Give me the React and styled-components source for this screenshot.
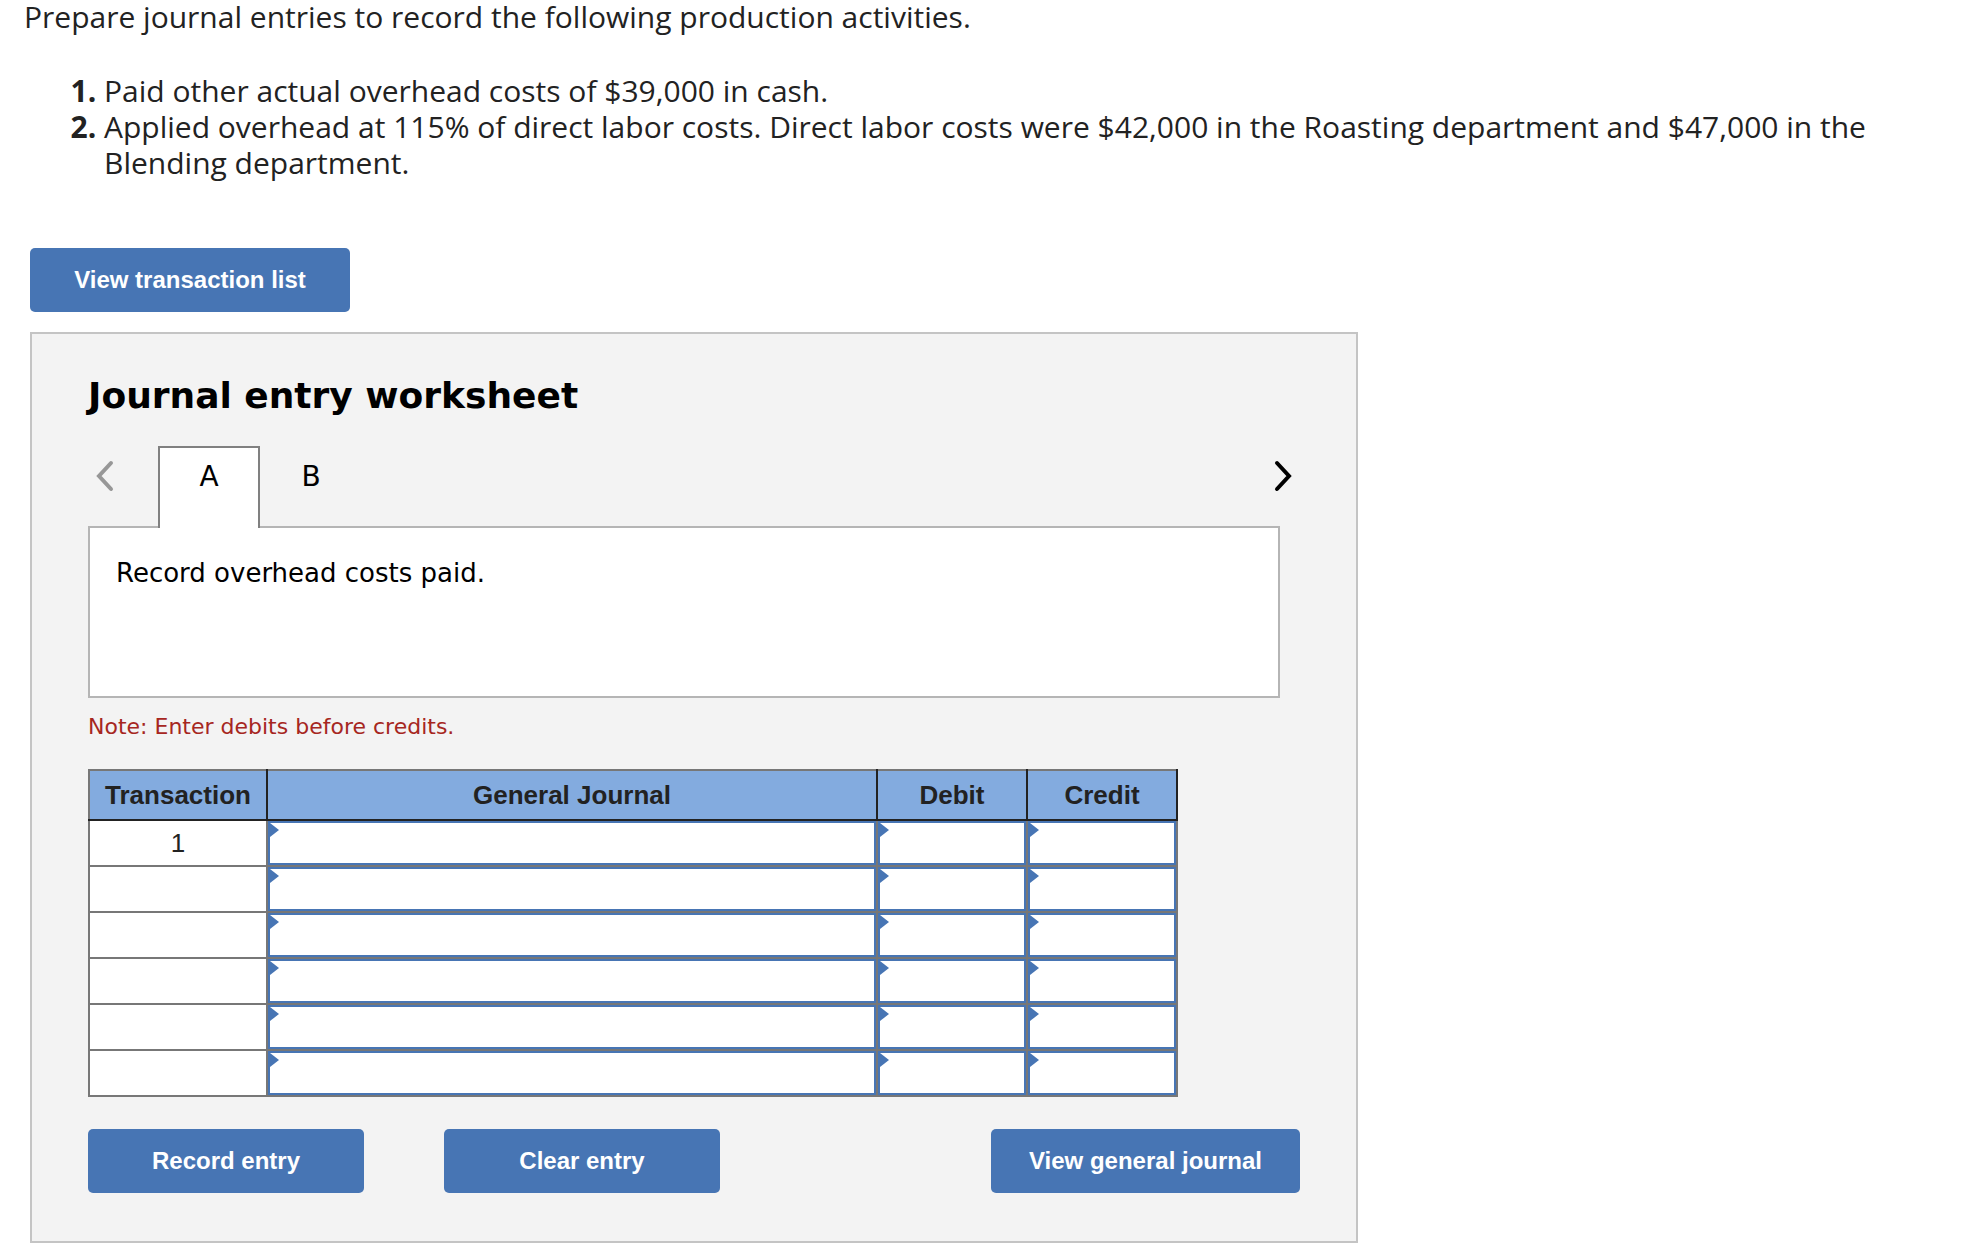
import React, { useState } from 'react';
import styled, { createGlobalStyle } from 'styled-components';

const theme = {
  blue: '#4775b4',
  headerBlue: '#83abdf',
  panel: '#f3f3f3',
  panelBorder: '#c4c4c4',
  boxBorder: '#b5b5b5',
  tabBorder: '#808080',
  tableBorder: '#777777',
  text: '#222222',
  note: '#a62621',
  verdana: "Verdana, 'DejaVu Sans', sans-serif",
  arial: "Arial, 'Liberation Sans', sans-serif",
};

const GlobalStyle = createGlobalStyle`
  * {
    box-sizing: border-box;
  }

  body {
    margin: 0;
    background-color: #ffffff;
    color: ${theme.text};
  }
`;

const Page = styled.main`
  padding: 0 24px;
  font-family: 'Open Sans', sans-serif;
  font-size: 30px;
`;

const Intro = styled.p`
  margin: 0 0 40px;
  line-height: 33px;
`;

const Activities = styled.ol`
  margin: 0 0 67px;
  padding-left: 80px;
  line-height: 36px;

  li::marker {
    font-weight: bold;
  }
`;

const Worksheet = styled.div`
  display: flex;
  flex-direction: column;
  align-items: flex-start;
  gap: 20px;
  padding-left: 6px;
`;

const Button = styled.button`
  width: ${({ $width }) => $width}px;
  height: 64px;
  padding: 0;
  border: none;
  border-radius: 5px;
  background-color: ${theme.blue};
  color: #ffffff;
  font-family: ${theme.arial};
  font-size: 24px;
  font-weight: bold;
  cursor: pointer;
`;

const Panel = styled.section`
  width: 100%;
  max-width: 1328px;
  padding: 40px 56px 48px;
  border: 2px solid ${theme.panelBorder};
  background-color: ${theme.panel};
  font-family: ${theme.verdana};
`;

const Title = styled.h2`
  margin: 0 0 28px;
  color: #000000;
  font-size: 36px;
  line-height: 44px;
`;

const TabBar = styled.div`
  display: flex;
  align-items: flex-start;
  margin-bottom: -2px;
`;

const ArrowButton = styled.button`
  display: flex;
  align-items: center;
  width: 70px;
  height: 60px;
  padding: 0 8px;
  border: none;
  background: none;
  color: ${({ disabled }) => (disabled ? '#979797' : '#000000')};
  justify-content: ${({ $end }) => ($end ? 'flex-end' : 'flex-start')};
  margin-left: ${({ $end }) => ($end ? 'auto' : '0')};
`;

const Tab = styled.button`
  width: 102px;
  height: 82px;
  padding: 0 0 22px;
  border: 2px solid ${({ $active }) => ($active ? theme.tabBorder : 'transparent')};
  border-bottom: none;
  background-color: ${({ $active }) => ($active ? '#ffffff' : 'transparent')};
  color: #000000;
  font-family: ${theme.verdana};
  font-size: 28px;
  line-height: 58px;
  z-index: 1;
`;

const Description = styled.div`
  min-height: 172px;
  margin-right: 20px;
  padding: 28px 26px;
  border: 2px solid ${theme.boxBorder};
  background-color: #ffffff;
  color: #000000;
  font-size: 26px;
  line-height: 34px;
`;

const Note = styled.p`
  margin: 15px 0 28px;
  color: ${theme.note};
  font-size: 22px;
  line-height: 28px;
`;

const Journal = styled.table`
  width: 100%;
  max-width: 1090px;
  border-collapse: collapse;
  table-layout: fixed;
  background-color: #ffffff;
  font-family: ${theme.arial};
  font-size: 26px;
`;

const HeadCell = styled.th`
  width: ${({ $width }) => ($width ? `${$width}px` : 'auto')};
  height: 50px;
  padding: 0;
  border: 2px solid ${theme.text};
  border-top-color: ${theme.tableBorder};
  background-color: ${theme.headerBlue};

  &:first-child {
    border-left-color: ${theme.tableBorder};
  }
`;

const Cell = styled.td`
  position: relative;
  height: 46px;
  padding: 0;
  border: 2px solid ${theme.tableBorder};
  text-align: center;
`;

const EntryCell = styled(Cell)`
  &::before {
    content: '';
    position: absolute;
    top: 2px;
    left: 2px;
    border: 7px solid transparent;
    border-left: 9px solid ${theme.blue};
    border-right: none;
  }
`;

const EntryInput = styled.input`
  display: block;
  width: 100%;
  height: 44px;
  padding: 0 12px;
  border: 2px solid ${theme.blue};
  border-radius: 0;
  background-color: #ffffff;
  font: inherit;
`;

const Actions = styled.div`
  display: flex;
  gap: 80px;
  margin-top: 32px;

  button:last-child {
    margin-left: auto;
  }
`;

const Chevron = ({ points }) => (
  <svg width="18" height="32" viewBox="0 0 18 32" fill="none" aria-hidden="true">
    <polyline
      points={points}
      stroke="currentColor"
      strokeWidth="4"
      strokeLinecap="round"
      strokeLinejoin="miter"
    />
  </svg>
);

const tabs = ['A', 'B'];
const rows = [1, 2, 3, 4, 5, 6];
const columns = ['General Journal', 'Debit', 'Credit'];

const App = () => {
  const [active, setActive] = useState('A');

  return (
    <Page>
      <GlobalStyle />
      <Intro>Prepare journal entries to record the following production activities.</Intro>
      <Activities>
        <li>Paid other actual overhead costs of $39,000 in cash.</li>
        <li>
          Applied overhead at 115% of direct labor costs. Direct labor costs were $42,000 in the
          Roasting department and $47,000 in the Blending department.
        </li>
      </Activities>
      <Worksheet>
        <Button type="button" $width={320}>
          View transaction list
        </Button>
        <Panel>
          <Title>Journal entry worksheet</Title>
          <TabBar>
            <ArrowButton type="button" aria-label="Previous" disabled>
              <Chevron points="15,3 3,16 15,29" />
            </ArrowButton>
            {tabs.map((tab) => (
              <Tab
                key={tab}
                type="button"
                $active={tab === active}
                onClick={() => setActive(tab)}
              >
                {tab}
              </Tab>
            ))}
            <ArrowButton type="button" aria-label="Next" $end>
              <Chevron points="3,3 15,16 3,29" />
            </ArrowButton>
          </TabBar>
          <Description>Record overhead costs paid.</Description>
          <Note>Note: Enter debits before credits.</Note>
          <Journal>
            <thead>
              <tr>
                <HeadCell $width={178}>Transaction</HeadCell>
                <HeadCell>General Journal</HeadCell>
                <HeadCell $width={150}>Debit</HeadCell>
                <HeadCell $width={150}>Credit</HeadCell>
              </tr>
            </thead>
            <tbody>
              {rows.map((row) => (
                <tr key={row}>
                  <Cell>{row === 1 ? row : null}</Cell>
                  {columns.map((column) => (
                    <EntryCell key={column}>
                      <EntryInput type="text" aria-label={`${column}, line ${row}`} />
                    </EntryCell>
                  ))}
                </tr>
              ))}
            </tbody>
          </Journal>
          <Actions>
            <Button type="button" $width={276}>
              Record entry
            </Button>
            <Button type="button" $width={276}>
              Clear entry
            </Button>
            <Button type="button" $width={309}>
              View general journal
            </Button>
          </Actions>
        </Panel>
      </Worksheet>
    </Page>
  );
};

export default App;
